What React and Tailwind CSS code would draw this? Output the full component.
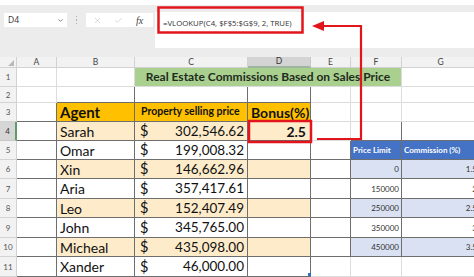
import React from 'react';
import { X, Check, ChevronDown } from 'lucide-react';

const agents = [
  ['Sarah', '302,546.62', true, 'h-[19px]'],
  ['Omar', '199,008.32', false, 'h-[19px]'],
  ['Xin', '146,662.96', true, 'h-[19px]'],
  ['Aria', '357,417.61', false, 'h-[20px]'],
  ['Leo', '152,407.49', true, 'h-[19px]'],
  ['John', '345,765.00', false, 'h-[20px]'],
  ['Micheal', '435,098.00', true, 'h-[19px]'],
  ['Xander', '46,000.00', false, 'h-[20px]'],
];

// F/G lookup table, row 4 .. row 11
const limits = [null, 'head', ['0', '1.5'], ['150000', '2'], ['250000', '2.5'], ['350000', '3'], ['450000', '3.5'], null];

const base = 'shrink-0 h-full border-r border-b flex items-center';
const grid = 'border-[#dcdcdc]';
const dark = 'border-[#6e6e6e]';

const RowHead = ({ n, active }) => (
  <div
    className={
      active
        ? 'shrink-0 h-full w-[17px] border-b border-[#c8c8c8] border-r-2 border-r-[#5e9c6a] bg-[#d6d6d6] flex items-center justify-center text-[8px] text-[#333]'
        : 'shrink-0 h-full w-[17px] border-r border-b border-[#d2d2d2] bg-[#f2f2f2] flex items-center justify-center text-[8px] text-[#555]'
    }
  >
    {n}
  </div>
);

const App = () => {
  return (
    <div className="relative w-[474px] h-[277px] overflow-hidden bg-white font-['Lato',sans-serif]">
      {/* toolbar / formula bar */}
      <div className="h-[5px] bg-white" />
      <div className="flex h-[52px] bg-[#ececec]">
        <div className="flex w-[155px] shrink-0 items-start pl-[4px] pt-[8px]">
          <div className="flex h-[14px] w-[63px] items-center justify-between bg-white pl-[4px] pr-[3px] font-['Open_Sans',sans-serif] text-[8.5px] text-[#333]">
            <span>D4</span>
            <ChevronDown size={7} strokeWidth={3} color="#777" />
          </div>
          <div className="flex h-[14px] w-[19px] flex-col items-center justify-center gap-[2px]">
            <span className="h-[1.5px] w-[1.5px] bg-[#b0b0b0]" />
            <span className="h-[1.5px] w-[1.5px] bg-[#b0b0b0]" />
            <span className="h-[1.5px] w-[1.5px] bg-[#b0b0b0]" />
          </div>
          <div className="flex h-[14px] w-[67px] items-center bg-white pl-[1px]">
            <span className="flex w-[21px] justify-center">
              <X size={9} strokeWidth={1.3} color="#b4b4b4" />
            </span>
            <span className="flex w-[21px] justify-center">
              <Check size={9} strokeWidth={1.3} color="#b4b4b4" />
            </span>
            <span className="flex w-[21px] justify-center font-['Liberation_Serif',serif] text-[10px] italic text-[#444]">
              fx
            </span>
          </div>
        </div>
        <div className="mt-[7px] h-[36px] flex-1 bg-white pl-[8px] pt-[6px] font-['Open_Sans',sans-serif] text-[7.8px] leading-[10px] text-[#333]">
          =VLOOKUP(C4, $F$5:$G$9, 2, TRUE)
        </div>
      </div>

      {/* column headers */}
      <div className="flex h-[11px] text-[8.5px] leading-none text-[#444]">
        <div className="relative shrink-0 h-full w-[17px] border-r border-b border-[#d2d2d2] bg-[#f2f2f2]">
          <div className="absolute bottom-[1px] right-[2px] h-0 w-0 border-l-[6px] border-b-[6px] border-l-transparent border-b-[#b9b9b9]" />
        </div>
        <div className="shrink-0 h-full w-[40px] border-r border-b border-[#d2d2d2] bg-[#f2f2f2] flex items-center justify-center">A</div>
        <div className="shrink-0 h-full w-[78px] border-r border-b border-[#d2d2d2] bg-[#f2f2f2] flex items-center justify-center">B</div>
        <div className="shrink-0 h-full w-[113px] border-r border-b border-[#d2d2d2] bg-[#f2f2f2] flex items-center justify-center">C</div>
        <div className="shrink-0 h-full w-[63px] border-r border-[#c8c8c8] border-b-2 border-b-[#9db59f] bg-[#d4d4d4] flex items-center justify-center text-[#333]">D</div>
        <div className="shrink-0 h-full w-[40px] border-r border-b border-[#d2d2d2] bg-[#f2f2f2] flex items-center justify-center">E</div>
        <div className="shrink-0 h-full w-[51px] border-r border-b border-[#d2d2d2] bg-[#f2f2f2] flex items-center justify-center">F</div>
        <div className="shrink-0 h-full w-[78px] border-r border-b border-[#d2d2d2] bg-[#f2f2f2] flex items-center justify-center">G</div>
      </div>

      {/* row 1 */}
      <div className="flex h-[19px]">
        <RowHead n={1} />
        <div className={`${base} ${grid} w-[40px]`} />
        <div className={`${base} ${grid} w-[78px]`} />
        <div className="shrink-0 h-full w-[267px] border-r border-b border-[#dcdcdc] bg-[#a9d08e] flex items-center justify-center text-[12px] font-bold text-[#1f2b1f]">
          Real Estate Commissions Based on Sales Price
        </div>
        <div className={`${base} ${grid} w-[78px]`} />
      </div>

      {/* row 2 */}
      <div className="flex h-[16px]">
        <RowHead n={2} />
        <div className={`${base} ${grid} w-[40px]`} />
        <div className={`${base} ${dark} w-[78px]`} />
        <div className={`${base} ${dark} w-[113px]`} />
        <div className={`${base} ${dark} w-[63px]`} />
        <div className={`${base} ${grid} w-[40px]`} />
        <div className={`${base} ${grid} w-[51px]`} />
        <div className={`${base} ${grid} w-[78px]`} />
      </div>

      {/* row 3 */}
      <div className="flex h-[19px] text-[#111]">
        <RowHead n={3} />
        <div className={`${base} ${dark} w-[40px]`} />
        <div className={`${base} ${dark} w-[78px] bg-[#ffc000] pl-[3px] text-[15px] font-bold`}>Agent</div>
        <div className={`${base} ${dark} w-[113px] bg-[#ffc000] pl-[6px] text-[10.5px] font-bold whitespace-nowrap`}>Property selling price</div>
        <div className={`${base} ${dark} w-[63px] bg-[#ffc000] pl-[3px] text-[14px] font-bold`}>Bonus(%)</div>
        <div className={`${base} ${grid} w-[40px]`} />
        <div className={`${base} ${grid} w-[51px]`} />
        <div className={`${base} ${grid} w-[78px]`} />
      </div>

      {/* rows 4 - 11 */}
      {agents.map(([name, price, shaded, h], i) => {
        const lim = limits[i];
        const fill = shaded ? 'bg-[#fdebca]' : 'bg-white';
        const blue = lim && lim !== 'head' ? (i % 2 === 0 ? 'bg-[#d9e1f2]' : 'bg-white') : '';
        return (
          <div key={name} className={`flex ${h} text-[#111]`}>
            <RowHead n={i + 4} active={i === 0} />
            <div className={`${base} ${dark} w-[40px]`} />
            <div className={`${base} ${dark} w-[78px] ${fill} pl-[3px] text-[14px]`}>{name}</div>
            <div className={`${base} ${dark} w-[113px] ${fill} justify-between pl-[5px] pr-[3px] text-[13.5px]`}>
              <span className="text-[14.5px]">$</span>
              <span>{price}</span>
            </div>
            <div className={`${base} ${dark} w-[63px] ${fill} justify-end pr-[4px] text-[14px] font-bold`}>
              {i === 0 ? '2.5' : ''}
            </div>
            <div className={`${base} ${lim ? dark : grid} w-[40px]`} />
            {lim === 'head' ? (
              <>
                <div className={`${base} ${dark} w-[51px] bg-[#4472c4] pl-[2px] text-[8px] font-bold text-white whitespace-nowrap`}>Price Limit</div>
                <div className={`${base} ${dark} w-[78px] bg-[#4472c4] pl-[2px] text-[8px] font-bold text-white whitespace-nowrap`}>Commission (%)</div>
              </>
            ) : lim ? (
              <>
                <div className={`${base} ${dark} w-[51px] ${blue} justify-end pr-[2px] text-[8px] text-[#333]`}>{lim[0]}</div>
                <div className={`${base} ${dark} w-[78px] ${blue} justify-end pr-[2px] text-[8px] text-[#333]`}>{lim[1]}</div>
              </>
            ) : (
              <>
                <div className={`${base} ${i === 0 ? dark : grid} w-[51px]`} />
                <div className={`${base} ${i === 0 ? dark : grid} w-[78px]`} />
              </>
            )}
          </div>
        );
      })}

      {/* annotation overlay */}
      <svg className="pointer-events-none absolute left-0 top-0" width="474" height="277" viewBox="0 0 474 277">
        <rect x="158.5" y="7.5" width="144" height="25" fill="none" stroke="#e2141c" strokeWidth="2.5" />
        <rect x="249" y="121" width="62" height="21" fill="none" stroke="#e2141c" strokeWidth="2.5" />
        <polyline points="317,139 361,139 361,26 322,26" fill="none" stroke="#e2141c" strokeWidth="2.2" />
        <polygon points="312,26 324,21 324,31" fill="#e2141c" />
        <rect x="308" y="273" width="3" height="3" fill="#2f6fc0" />
      </svg>
    </div>
  );
};

export default App;
